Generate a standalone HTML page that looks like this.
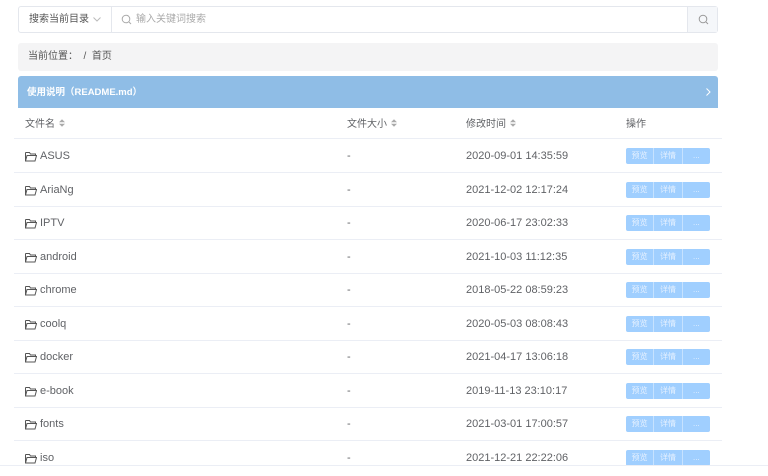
<!DOCTYPE html>
<html><head><meta charset="utf-8">
<style>
*{margin:0;padding:0;box-sizing:border-box}
body{width:768px;height:466px;overflow:hidden;background:#fff;font-family:"Liberation Sans","Noto Sans CJK SC",sans-serif;color:#606266;position:relative}
.abs{position:absolute}
.search{left:18px;top:6px;width:700px;height:27px;border:1px solid #e4e7ed;border-radius:3px;background:#fff}
.sel{left:0;top:0;width:93px;height:25px;border-right:1px solid #e4e7ed;font-size:10px;color:#555;line-height:25px;padding-left:10px}
.sbtn{right:0;top:0;width:30px;height:25px;background:#f5f7fa;border-left:1px solid #e4e7ed}
.bc{left:18px;top:43px;width:700px;height:28px;background:#f4f4f5;border-radius:3px;font-size:10px;line-height:28px;padding-left:10px;color:#555}
.readme{left:18px;top:76px;width:700px;height:32px;background:#8fbde6;border-radius:3px 3px 0 0;color:#fff;font-size:9.5px;font-weight:bold;line-height:33px;padding-left:9px}
.th{top:110px;height:30px;line-height:30px;font-size:10px;color:#606266}
.line{left:14px;width:708px;height:1px;background:#ebeef5}
.row{left:0;width:768px;height:33px;font-size:11px;line-height:35px;color:#606266}
.btns{left:626px;top:9px;height:16px;width:84px;display:flex;border-radius:2px;overflow:hidden}
.btns span{flex:1;background:#a0cfff;color:#e6f1ff;font-size:8px;line-height:16px;text-align:center;border-right:1px solid #c6e2ff}
.btns span:last-child{border-right:0}
.sort{display:inline-block;vertical-align:middle;margin-left:4px;margin-top:-2px}
</style></head><body>
<div class="abs search">
 <div class="abs sel">搜索当前目录<svg style="position:absolute;left:74px;top:10px" width="8" height="5" viewBox="0 0 8 5"><path d="M0.5 0.5l3.5 3.5 3.5-3.5" fill="none" stroke="#bbb"/></svg></div>
 <svg class="abs" style="left:102px;top:7px" width="11" height="11" viewBox="0 0 11 11"><circle cx="5" cy="5" r="3.8" fill="none" stroke="#aaa" stroke-width="1"/><path d="M8 8l2 2" stroke="#aaa"/></svg>
 <div class="abs" style="left:117px;top:0;line-height:25px;font-size:10px;color:#aaa">输入关键词搜索</div>
 <div class="abs sbtn"><svg class="abs" style="left:10px;top:7px" width="11" height="11" viewBox="0 0 11 11"><circle cx="5" cy="5" r="3.8" fill="none" stroke="#999" stroke-width="1"/><path d="M8 8l2 2" stroke="#999"/></svg></div>
</div>
<div class="abs bc">当前位置： &nbsp;/ &nbsp;首页</div>
<div class="abs readme">使用说明（README.md）<svg style="position:absolute;right:7px;top:12px" width="5" height="8" viewBox="0 0 5 8"><path d="M0.5 0.5l3.5 3.5-3.5 3.5" fill="none" stroke="#fff"/></svg></div>
<div class="abs th" style="left:25px">文件名<svg class="sort" width="6" height="8" viewBox="0 0 6 8"><path d="M0 3.3L3 0.3 6 3.3zM0 4.7L3 7.7 6 4.7z" fill="#aaa"/></svg></div>
<div class="abs th" style="left:347px">文件大小<svg class="sort" width="6" height="8" viewBox="0 0 6 8"><path d="M0 3.3L3 0.3 6 3.3zM0 4.7L3 7.7 6 4.7z" fill="#aaa"/></svg></div>
<div class="abs th" style="left:466px">修改时间<svg class="sort" width="6" height="8" viewBox="0 0 6 8"><path d="M0 3.3L3 0.3 6 3.3zM0 4.7L3 7.7 6 4.7z" fill="#aaa"/></svg></div>
<div class="abs th" style="left:626px">操作</div>
<div class="abs line" style="top:138px"></div>
<div id="rows"></div>
<script>
var d=[["ASUS","2020-09-01 14:35:59"],["AriaNg","2021-12-02 12:17:24"],["IPTV","2020-06-17 23:02:33"],["android","2021-10-03 11:12:35"],["chrome","2018-05-22 08:59:23"],["coolq","2020-05-03 08:08:43"],["docker","2021-04-17 13:06:18"],["e-book","2019-11-13 23:10:17"],["fonts","2021-03-01 17:00:57"],["iso","2021-12-21 22:22:06"]];
var h="";
d.forEach(function(r,i){var t=139+i*33.5;
h+='<div class="abs row" style="top:'+t+'px"><svg class="abs" style="left:25px;top:12px" width="12" height="11" viewBox="0 0 12 11"><path d="M0.5 1.5h4l1 1.5h5v1.5M0.5 1.5v8.5h9.5l1.5-5.5h-9.5L0.5 10" fill="none" stroke="#555" stroke-width="1"/></svg><span class="abs" style="left:40px">'+r[0]+'</span><span class="abs" style="left:347px">-</span><span class="abs" style="left:466px">'+r[1]+'</span><div class="abs btns"><span>预览</span><span>详情</span><span>...</span></div></div>';
if(i<9)h+='<div class="abs line" style="top:'+(t+33)+'px"></div>';});
h+='<div class="abs" style="left:0;top:465px;width:768px;height:1px;background:#ebeef5"></div>';
document.getElementById("rows").innerHTML=h;
</script>
</body></html>
